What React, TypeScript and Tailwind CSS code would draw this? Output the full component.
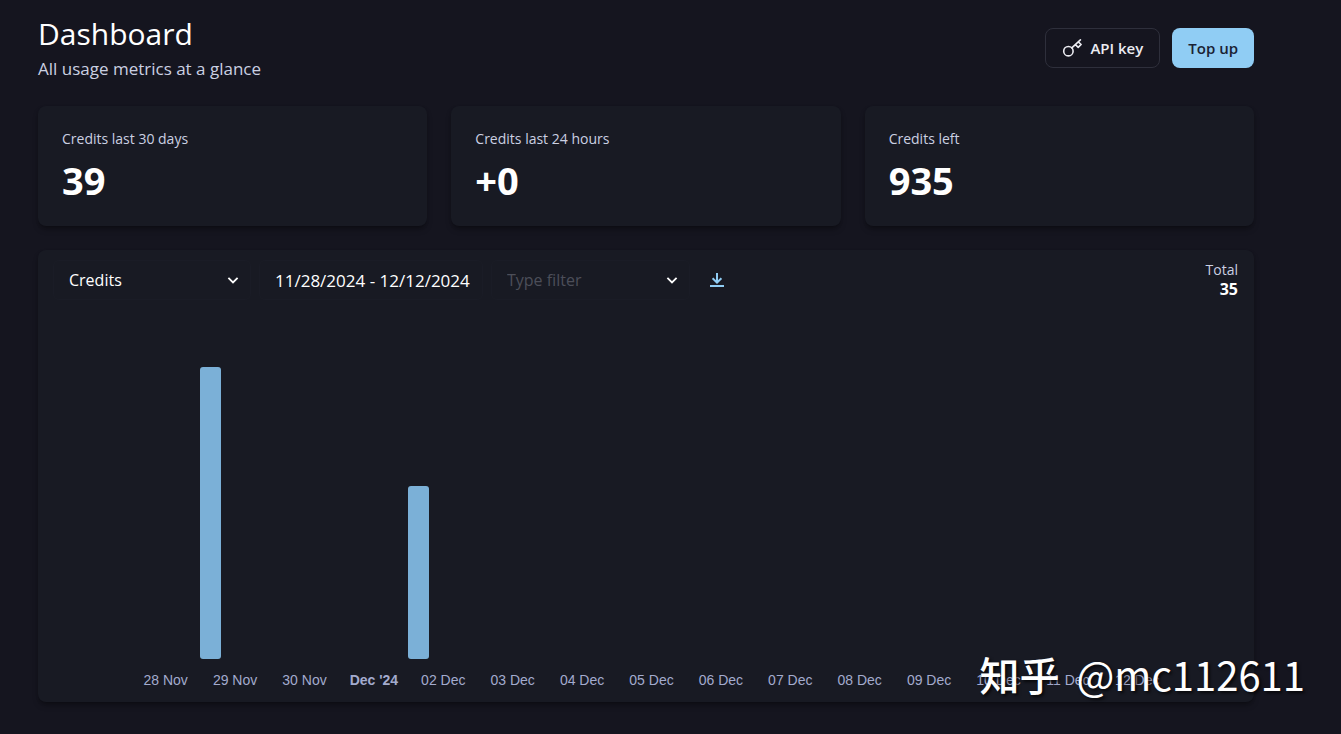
const stats = [
  { label: 'Credits last 30 days', value: '39' },
  { label: 'Credits last 24 hours', value: '+0' },
  { label: 'Credits left', value: '935' },
];

const days = [
  { label: '28 Nov', credits: 0 },
  { label: '29 Nov', credits: 22 },
  { label: '30 Nov', credits: 0 },
  { label: "Dec '24", credits: 0, month: true },
  { label: '02 Dec', credits: 13 },
  { label: '03 Dec', credits: 0 },
  { label: '04 Dec', credits: 0 },
  { label: '05 Dec', credits: 0 },
  { label: '06 Dec', credits: 0 },
  { label: '07 Dec', credits: 0 },
  { label: '08 Dec', credits: 0 },
  { label: '09 Dec', credits: 0 },
  { label: '10 Dec', credits: 0 },
  { label: '11 Dec', credits: 0 },
  { label: '12 Dec', credits: 0 },
];

const SCALE_MAX = 22;

function KeyIcon() {
  return (
    <svg viewBox="0 0 20 20" className="size-5" fill="none" stroke="currentColor" strokeWidth="1.6" strokeLinecap="round" strokeLinejoin="round" aria-hidden="true">
      <circle cx="6.4" cy="13.2" r="4.7" />
      <path d="M9.8 9.9 18.4 1.9M13.4 6.6l2.8 2.7 2.9-2.8-2.8-2.7" />
    </svg>
  );
}

function Chevron() {
  return (
    <svg viewBox="0 0 20 20" className="pointer-events-none col-start-1 row-start-1 mr-2 size-5 self-center justify-self-end text-white" fill="none" stroke="currentColor" strokeWidth="1.8" aria-hidden="true">
      <path d="M5.4 7.8 10 12.4l4.6-4.6" />
    </svg>
  );
}

function DownloadIcon() {
  return (
    <svg viewBox="0 0 16 16" className="size-4" fill="none" stroke="currentColor" strokeWidth="2" aria-hidden="true">
      <path d="M8 1v9M3.6 6.2 8 10.6l4.4-4.4M1 14h14" />
    </svg>
  );
}

export default function App() {
  return (
    <div className="relative min-h-screen bg-[#15151f] pt-3 pr-[87px] pb-8 pl-[38px] font-['Open_Sans','Noto_Sans',sans-serif] text-white">
      <header className="flex items-start justify-between">
        <div>
          <h1 className="text-[30px] leading-[44px]">Dashboard</h1>
          <p className="text-[17px] leading-[26px] text-[#cbd0e2]">All usage metrics at a glance</p>
        </div>
        <div className="mt-4 flex gap-3">
          <button type="button" className="flex h-10 items-center gap-2 rounded-lg border border-[#2e2f3b] px-4 text-[15px] font-semibold text-[#ececf2]">
            <KeyIcon />
            API key
          </button>
          <button type="button" className="h-10 rounded-lg bg-[#90cdf4] px-4 text-[15px] font-semibold text-[#1a2233]">
            Top up
          </button>
        </div>
      </header>

      <main className="mt-6 flex flex-col gap-6">
        <dl className="grid grid-cols-3 gap-6">
          {stats.map((s) => (
            <div key={s.label} className="h-[120px] rounded-lg bg-[#181a23] px-6 pt-5 shadow-md shadow-black/30">
              <dt className="text-sm leading-[26px] text-[#cbd0e2]">{s.label}</dt>
              <dd className="mt-0.5 text-[38px] leading-[52px] font-bold">{s.value}</dd>
            </div>
          ))}
        </dl>

        <section className="rounded-lg bg-[#181a23] pb-2.5 shadow-md shadow-black/30">
          <div className="flex items-start justify-between pt-2.5 pr-4 pl-[15px]">
            <div className="flex items-center gap-2">
              <div className="grid w-[198px]">
                <select aria-label="Metric" className="col-start-1 row-start-1 h-10 appearance-none rounded-md border border-[#1a1c26] bg-transparent px-[15px] text-base" defaultValue="Credits">
                  <option>Credits</option>
                </select>
                <Chevron />
              </div>
              <input aria-label="Date range" className="h-10 w-[224px] rounded-md border border-[#1a1c26] bg-transparent pr-2 pl-[15px] text-[17px]" defaultValue="11/28/2024 - 12/12/2024" />
              <div className="grid w-[199px]">
                <select aria-label="Type" className="col-start-1 row-start-1 h-10 appearance-none rounded-md border border-[#1a1c26] bg-transparent px-[15px] text-base text-[#4c4e59]" defaultValue="">
                  <option value="">Type filter</option>
                </select>
                <Chevron />
              </div>
              <button type="button" aria-label="Download" className="ml-[11px] text-[#90cdf4]">
                <DownloadIcon />
              </button>
            </div>
            <div className="text-right">
              <div className="text-sm leading-5 text-[#cbd0e2]">Total</div>
              <div className="text-base leading-[18px] font-bold">35</div>
            </div>
          </div>

          <div className="mt-[67px] grid h-[292px] grid-cols-15 items-end pr-[107px] pl-[68px]">
            {days.map((d) => (
              <div
                key={d.label}
                className="mx-auto w-[30%] rounded-[3px] bg-[#7bb0d7]"
                style={{ height: `${(d.credits / SCALE_MAX) * 100}%` }}
              />
            ))}
          </div>
          <div className="mt-[9px] grid grid-cols-15 pr-[82px] pl-[93px] font-['Liberation_Sans',Arial,sans-serif] text-sm leading-6 text-[#a3abce]">
            {days.map((d) => (
              <span key={d.label} className={d.month ? 'text-center font-bold whitespace-nowrap' : 'text-center whitespace-nowrap'}>
                {d.label}
              </span>
            ))}
          </div>
        </section>
      </main>

      <div className="pointer-events-none absolute right-9 bottom-[30px] flex gap-[17px] font-['Noto_Sans_CJK_SC',sans-serif] text-[40px] leading-[60px] whitespace-nowrap text-white [text-shadow:2px_2px_3px_rgb(0_0_0/0.7)]">
        <span className="font-medium">知乎</span>
        <span>@mc112611</span>
      </div>
    </div>
  );
}
